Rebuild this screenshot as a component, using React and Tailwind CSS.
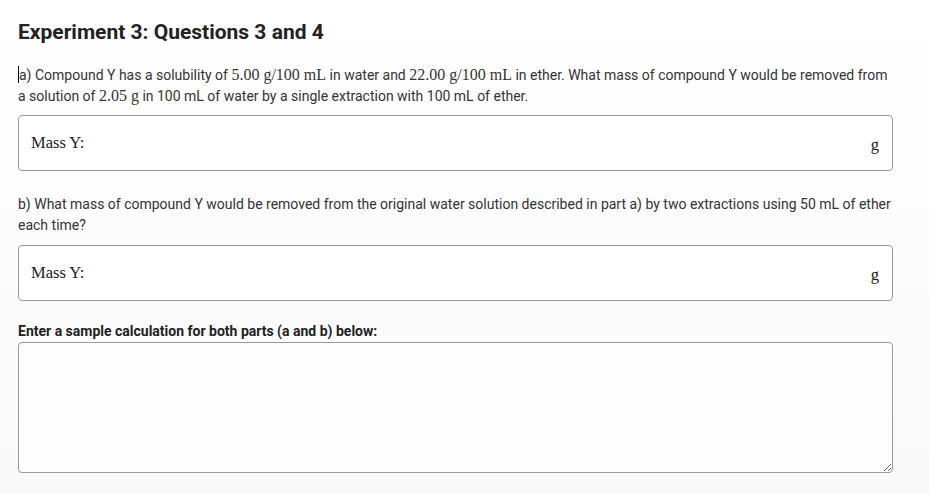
import React from "react";

const M = ({ children }) => (
  <span style={{ fontFamily: '"Liberation Serif", "DejaVu Serif", serif' }} className="text-[16px] leading-none">
    {children}
  </span>
);

function MassInput({ className }) {
  return (
    <div className={"flex h-[56px] w-full items-center justify-between rounded-[4px] border border-[#9a9a9a] bg-white px-[12px] text-[16.5px] text-[#222] font-['Liberation_Serif',serif] " + className}>
      <span>Mass Y:</span>
      <span className="mr-[1px] mt-[4px]">g</span>
    </div>
  );
}

export default function App() {
  return (
    <div className="min-h-[494px] w-[929px] bg-gradient-to-b from-white to-[#f9f9f9] pl-[18px] pr-[36px] pt-[20px] font-['Roboto',sans-serif] text-[#222]">
      <h1 className="text-[21px] font-bold leading-[24px] text-[#222]">Experiment 3: Questions 3 and 4</h1>
      <p className="mt-[21px] text-[14px] leading-[21px] text-[#333]">
        <span className="inline-block h-[17px] w-0 border-l border-black align-[-3px]"></span>
        a) Compound Y has a solubility of <M>5.00 g/100 mL</M> in water and <M>22.00 g/100 mL</M> in ether. What mass of compound Y would be removed from a solution of <M>2.05 g</M> in 100 mL of water by a single extraction with 100 mL of ether.
      </p>
      <MassInput className="mt-[8px]" />
      <p className="mt-[23px] text-[14px] leading-[21px] text-[#333]">
        b) What mass of compound Y would be removed from the original water solution described in part a) by two extractions using 50 mL of ether each time?
      </p>
      <MassInput className="mt-[9px]" />
      <p className="mt-[21px] text-[14px] font-bold leading-[18px] text-[#222]">
        Enter a sample calculation for both parts (a and b) below:
      </p>
      <textarea className="mt-[2px] block h-[131px] w-full rounded-[4px] border border-[#9a9a9a] bg-[#fdfdfd] outline-none"></textarea>
    </div>
  );
}
